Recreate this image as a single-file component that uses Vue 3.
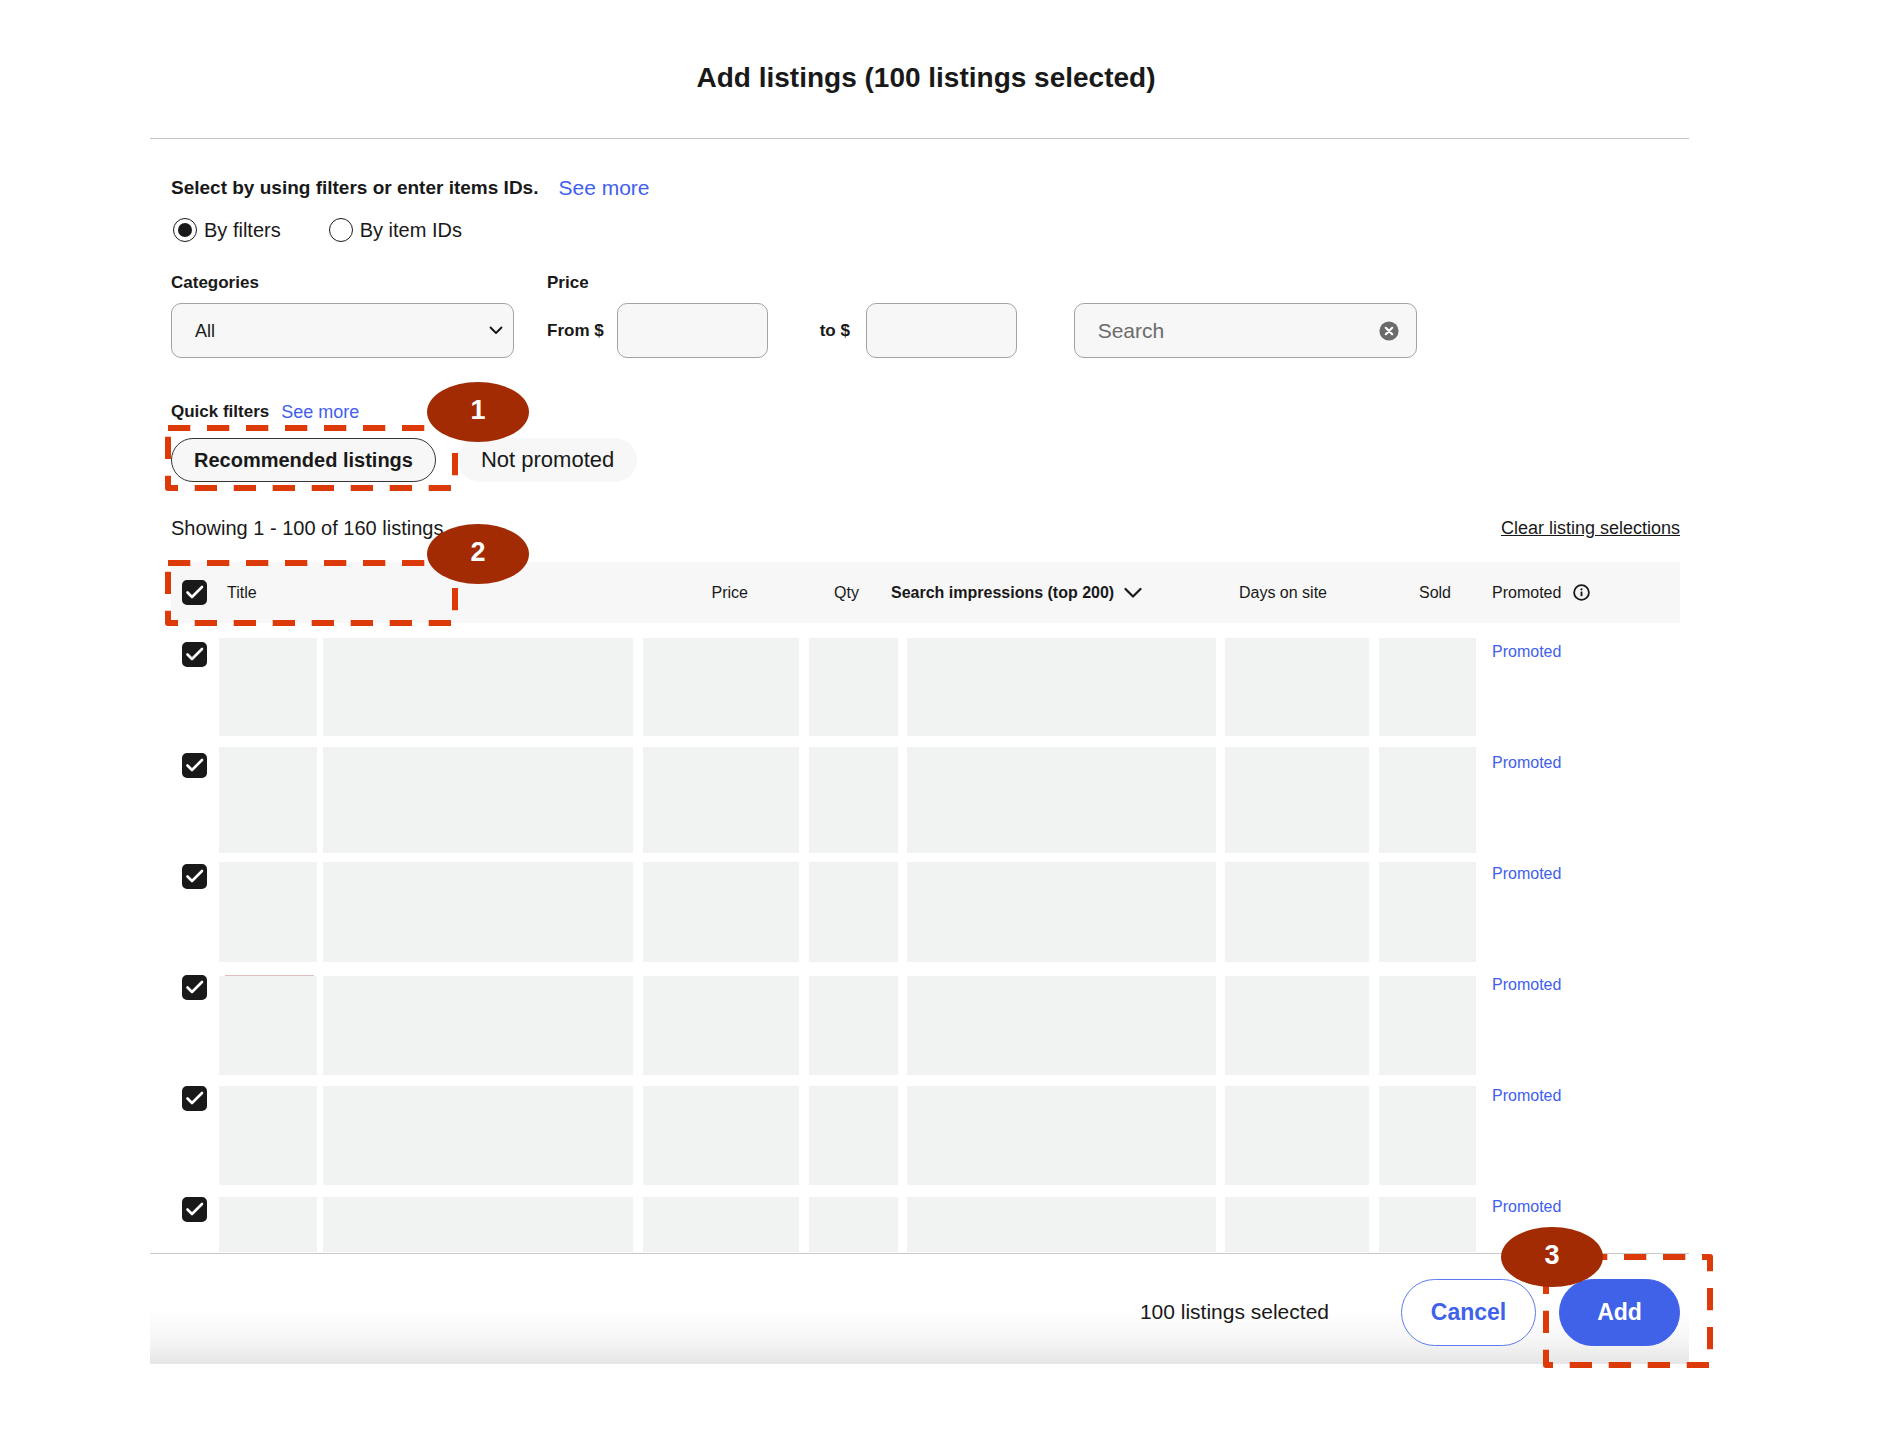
<script setup>
import { ref, computed } from 'vue'

const mode = ref('filters')
const category = ref('All')
const priceFrom = ref('')
const priceTo = ref('')
const search = ref('')

const placeholders = ['thumb', 'title', 'price', 'qty', 'impressions', 'days', 'sold']

const rows = ref([
  { id: 1, checked: true, top: 7, block: 98 },
  { id: 2, checked: true, top: 5, block: 106 },
  { id: 3, checked: true, top: 9, block: 100 },
  { id: 4, checked: true, top: 12, block: 99, flagged: true },
  { id: 5, checked: true, top: 11, block: 99 },
  { id: 6, checked: true, top: 11, block: 55, partial: true }
])

const allChecked = computed({
  get: () => rows.value.every((r) => r.checked),
  set: (v) => rows.value.forEach((r) => { r.checked = v })
})
</script>

<template>
  <main class="page">
    <section class="dialog" aria-labelledby="dialog-title">
      <header class="dialog-head">
        <h1 id="dialog-title">Add listings (100 listings selected)</h1>
      </header>

      <div class="dialog-body">
        <p class="intro">
          <strong>Select by using filters or enter items IDs.</strong>
          <a href="#">See more</a>
        </p>

        <div class="modes">
          <label><input v-model="mode" type="radio" name="mode" value="filters" />By filters</label>
          <label><input v-model="mode" type="radio" name="mode" value="ids" />By item IDs</label>
        </div>

        <div class="filters">
          <div class="group">
            <label class="caption" for="category">Categories</label>
            <div class="select">
              <select id="category" v-model="category" class="field">
                <option>All</option>
              </select>
              <svg width="14" height="9" viewBox="0 0 14 9" aria-hidden="true">
                <path d="M1.5 1.5 7 7l5.500-5.500" fill="none" stroke="#111" stroke-width="1.800" stroke-linecap="round" stroke-linejoin="round" />
              </svg>
            </div>
          </div>

          <div class="group">
            <span class="caption">Price</span>
            <div class="range">
              <label class="caption" for="from">From $</label>
              <input id="from" v-model="priceFrom" class="field amount" type="text" />
              <label class="caption to" for="to">to $</label>
              <input id="to" v-model="priceTo" class="field amount" type="text" />
            </div>
          </div>

          <div class="search">
            <input v-model="search" class="field" type="text" placeholder="Search" aria-label="Search" />
            <button type="button" aria-label="Clear search" @click="search = ''">
              <svg width="20" height="20" viewBox="0 0 20 20" aria-hidden="true">
                <circle cx="10" cy="10" r="9.600" fill="#6b6b6b" />
                <path d="m6.800 6.800 6.400 6.400m0-6.400-6.400 6.400" stroke="#fff" stroke-width="2.200" stroke-linecap="round" />
              </svg>
            </button>
          </div>
        </div>

        <p class="quick-title">
          <strong>Quick filters</strong>
          <a href="#">See more</a>
        </p>

        <div class="pills">
          <button type="button" class="pill active">Recommended listings</button>
          <button type="button" class="pill">Not promoted</button>
          <div class="callout callout-1">
            <svg width="293" height="66" aria-hidden="true"><rect x="3" y="3" width="287" height="60" /></svg>
            <span class="badge">1</span>
          </div>
        </div>

        <div class="summary">
          <span>Showing 1 - 100 of 160 listings</span>
          <a href="#">Clear listing selections</a>
        </div>

        <div class="table-wrap">
          <table>
            <colgroup>
              <col class="c-check" />
              <col class="c-thumb" />
              <col />
              <col class="c-price" />
              <col class="c-qty" />
              <col class="c-impressions" />
              <col class="c-days" />
              <col class="c-sold" />
              <col class="c-promoted" />
            </colgroup>
            <thead>
              <tr>
                <th class="check-cell">
                  <label class="check">
                    <input v-model="allChecked" type="checkbox" aria-label="Select all listings" />
                    <svg viewBox="0 0 25 25" aria-hidden="true"><path d="m5.500 12.500 4.500 4.500L20 7" /></svg>
                  </label>
                </th>
                <th class="h-title" colspan="2">Title</th>
                <th class="h-price">Price</th>
                <th class="h-qty">Qty</th>
                <th>
                  <button type="button" class="sort">
                    Search impressions (top 200)
                    <svg width="18" height="12" viewBox="0 0 18 12" aria-hidden="true">
                      <path d="m1.500 2 7.500 7.500L16.500 2" fill="none" stroke="#191919" stroke-width="2.200" stroke-linecap="round" stroke-linejoin="round" />
                    </svg>
                  </button>
                </th>
                <th class="h-days">Days on site</th>
                <th class="h-sold">Sold</th>
                <th>
                  <span class="h-promoted">
                    Promoted
                    <svg width="17" height="17" viewBox="0 0 17 17" aria-hidden="true">
                      <circle cx="8.500" cy="8.500" r="7.400" fill="none" stroke="#191919" stroke-width="1.800" />
                      <circle cx="8.500" cy="5.300" r="1.100" fill="#191919" />
                      <path d="M8.500 7.600v4.600" stroke="#191919" stroke-width="1.900" />
                    </svg>
                  </span>
                </th>
              </tr>
            </thead>
            <tbody>
              <tr v-for="row in rows" :key="row.id" :class="{ partial: row.partial }">
                <td class="check-cell">
                  <label class="check">
                    <input v-model="row.checked" type="checkbox" :aria-label="`Select listing ${row.id}`" />
                    <svg viewBox="0 0 25 25" aria-hidden="true"><path d="m5.500 12.500 4.500 4.500L20 7" /></svg>
                  </label>
                </td>
                <td v-for="name in placeholders" :key="name" :class="name" :style="{ paddingTop: `${row.top}px` }">
                  <div class="block" :class="{ flagged: row.flagged && name === 'thumb' }" :style="{ height: `${row.block}px` }"></div>
                </td>
                <td class="promoted"><a href="#">Promoted</a></td>
              </tr>
            </tbody>
          </table>
          <div class="callout callout-2">
            <svg width="293" height="66" aria-hidden="true"><rect x="3" y="3" width="287" height="60" /></svg>
            <span class="badge">2</span>
          </div>
        </div>
      </div>

      <footer class="dialog-foot">
        <span class="count">100 listings selected</span>
        <button type="button" class="action">Cancel</button>
        <div class="add">
          <button type="button" class="action primary">Add</button>
          <div class="callout callout-3">
            <svg width="170" height="114" aria-hidden="true"><rect x="3" y="3" width="164" height="108" /></svg>
            <span class="badge">3</span>
          </div>
        </div>
      </footer>
    </section>
  </main>
</template>

<style>
body {
  background: #fff;
}
</style>

<style scoped>
.page,
.page * {
  box-sizing: border-box;
}

.page {
  padding: 0 207px 72px 150px;
  font-family: "Liberation Sans", Arial, sans-serif;
  font-size: 20px;
  line-height: 24px;
  color: #191919;
}

button,
input,
select {
  font: inherit;
  color: inherit;
  margin: 0;
}

button {
  border: 0;
  padding: 0;
  background: none;
  cursor: pointer;
}

svg {
  display: block;
}

p {
  margin: 0;
}

a {
  color: #3f60ee;
  text-decoration: none;
}

.dialog-head {
  padding: 62px 0 44px 13px;
  border-bottom: 1px solid #c4c4c4;
  text-align: center;
}

h1 {
  margin: 0;
  font-size: 28px;
  line-height: 32px;
}

.dialog-body {
  padding: 37px 9px 0 21px;
}

.intro {
  display: flex;
  gap: 20px;
}

.intro strong {
  font-size: 19px;
}

.intro a {
  font-size: 21px;
}

.modes {
  display: flex;
  gap: 48px;
  margin: 18px 0 0 2px;
}

.modes label {
  display: flex;
  align-items: center;
  gap: 7px;
}

.modes input {
  appearance: none;
  display: grid;
  place-items: center;
  width: 24px;
  height: 24px;
  border: 1px solid #191919;
  border-radius: 50%;
}

.modes input:checked::before {
  content: "";
  width: 14px;
  height: 14px;
  border-radius: 50%;
  background: #191919;
}

.filters {
  display: flex;
  align-items: flex-end;
  margin-top: 31px;
}

.group {
  display: grid;
  gap: 10px;
  margin-right: 33px;
}

.caption {
  font-size: 17px;
  font-weight: 700;
  line-height: 20px;
}

.field {
  width: 100%;
  height: 55px;
  padding: 0 23px;
  border: 1px solid #a3a3a3;
  border-radius: 10px;
  background: #f7f7f7;
}

.select,
.search {
  display: grid;
  align-items: center;
  width: 343px;
}

.select > *,
.search > * {
  grid-area: 1 / 1;
}

.select select {
  appearance: none;
  font-size: 18px;
}

.select svg {
  justify-self: end;
  margin-right: 11px;
  pointer-events: none;
}

.range {
  display: flex;
  align-items: center;
  gap: 13px;
}

.amount {
  width: 151px;
}

.to {
  min-width: 33px;
  margin-left: 39px;
}

.search {
  margin-left: 24px;
  font-size: 21px;
}

.search input::placeholder {
  color: #6b6b6b;
  opacity: 1;
}

.search button {
  justify-self: end;
  margin-right: 18px;
}

.quick-title {
  display: flex;
  gap: 12px;
  margin-top: 44px;
  font-size: 17px;
  line-height: 20px;
}

.quick-title a {
  font-size: 18px;
}

.pills {
  position: relative;
  display: flex;
  gap: 22px;
  margin-top: 16px;
}

.pill {
  height: 44px;
  padding: 0 23px;
  border-radius: 22px;
  background: #f7f7f7;
  font-size: 22px;
}

.pill.active {
  padding: 0 22px;
  border: 1px solid #363636;
  font-size: 20px;
  font-weight: 700;
}

.summary {
  display: flex;
  justify-content: space-between;
  margin: 34px 0 22px;
}

.summary a {
  font-size: 18px;
  color: #191919;
  text-decoration: underline;
}

.table-wrap {
  position: relative;
}

table {
  width: 100%;
  table-layout: fixed;
  border-collapse: collapse;
  font-size: 16px;
  line-height: 20px;
}

.c-check { width: 48px; }
.c-thumb { width: 104px; }
.c-price { width: 166px; }
.c-qty { width: 98px; }
.c-impressions { width: 318px; }
.c-days { width: 154px; }
.c-sold { width: 113px; }
.c-promoted { width: 188px; }

thead tr {
  height: 61px;
  background: #f7f7f7;
}

th {
  padding: 0;
  font-weight: 400;
  text-align: left;
  white-space: nowrap;
}

.h-title { padding-left: 8px; }
.h-price { text-align: right; padding-right: 61px; }
.h-qty { text-align: right; padding-right: 48px; }
.h-days { text-align: right; padding-right: 52px; }
.h-sold { text-align: right; padding-right: 41px; }

.sort {
  display: flex;
  align-items: center;
  gap: 10px;
  margin-left: -16px;
  font-weight: 700;
}

.h-promoted {
  display: flex;
  align-items: center;
  gap: 12px;
}

tbody::before {
  content: "";
  display: block;
  height: 8px;
}

tbody tr {
  height: 111px;
}

tbody tr.partial {
  height: 67px;
}

td {
  padding: 0 10px 0 0;
  vertical-align: top;
}

.check-cell {
  padding: 0 0 0 11px;
}

td.check-cell,
td.promoted {
  padding-top: 11px;
}

td.thumb { padding-right: 6px; }
td.qty,
td.impressions { padding-right: 9px; }
td.sold { padding-right: 16px; }

.block {
  position: relative;
  background: #f1f3f3;
}

.block.flagged::before {
  content: "";
  position: absolute;
  top: -1px;
  left: 6px;
  right: 3px;
  height: 1px;
  background: #dfbebf;
}

.check {
  display: grid;
  width: 25px;
  height: 25px;
}

.check > * {
  grid-area: 1 / 1;
}

.check input {
  appearance: none;
  width: 25px;
  height: 25px;
  border: 2px solid #191919;
  border-radius: 5px;
}

.check input:checked {
  background: #191919;
}

.check svg {
  fill: none;
  stroke: #fff;
  stroke-width: 2.6;
  stroke-linecap: round;
  stroke-linejoin: round;
  pointer-events: none;
}

.dialog-foot {
  display: flex;
  align-items: center;
  justify-content: flex-end;
  gap: 23px;
  height: 111px;
  padding: 6px 9px 0 0;
  border-top: 1px solid #cacaca;
  background: linear-gradient(#fff 50%, #f7f7f7 76%, #e6e6e6);
}

.count {
  margin-right: 49px;
  font-size: 21px;
}

.action {
  width: 135px;
  height: 67px;
  border: 1px solid #5c7cf0;
  border-radius: 34px;
  background: #fff;
  font-size: 23px;
  font-weight: 700;
  color: #4062ea;
}

.action.primary {
  width: 121px;
  border-color: #4062e8;
  background: #4062e8;
  color: #fff;
}

.add {
  position: relative;
}

.callout {
  position: absolute;
  pointer-events: none;
}

.callout rect {
  fill: none;
  stroke: #dd3a0a;
  stroke-width: 6;
  stroke-dasharray: 22.3 16.7;
  stroke-linejoin: round;
}

.callout-1 { top: -13px; left: -6px; }
.callout-2 { top: -2px; left: -6px; }
.callout-3 { top: -25px; left: -16px; }

.badge {
  position: absolute;
  top: -43px;
  left: 262px;
  display: flex;
  align-items: center;
  justify-content: center;
  width: 102px;
  height: 60px;
  padding-bottom: 4px;
  border-radius: 50%;
  background: #a32b04;
  font-size: 27px;
  font-weight: 700;
  color: #fff;
}

.callout-2 .badge { top: -36px; }

.callout-3 .badge {
  top: -27px;
  left: -42px;
}
</style>
